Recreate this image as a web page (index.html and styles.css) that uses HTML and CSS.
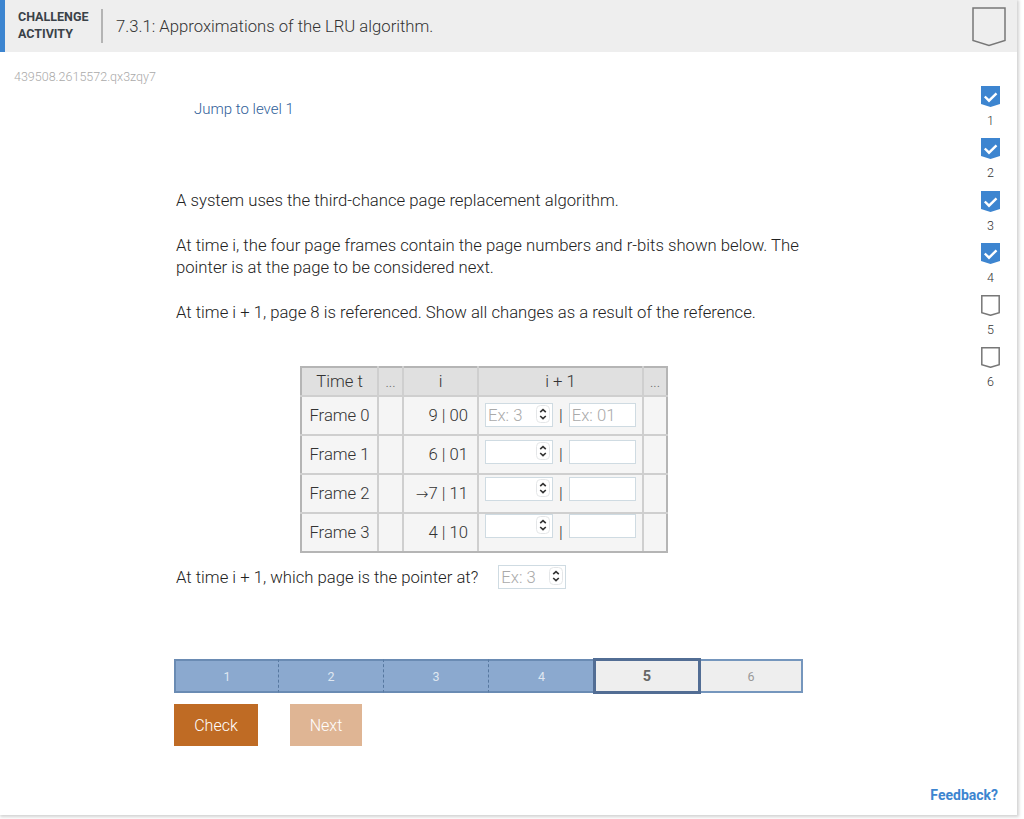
FILE: index.html
```html
<!DOCTYPE html>
<html lang="en">
<head>
<meta charset="utf-8">
<title>Challenge activity</title>
<link rel="stylesheet" href="styles.css">
</head>
<body>
<svg class="defs" width="0" height="0" aria-hidden="true">
  <symbol id="spin" viewBox="0 0 14 18">
    <rect x="0.5" y="0.5" width="13" height="17" rx="4" fill="#fff" stroke="#e4e6e8"/>
    <path d="M4.200 7.200L7 4.600L9.800 7.200M4.200 11L7 13.600L9.800 11" fill="none" stroke="#333" stroke-width="1.600"/>
  </symbol>
  <symbol id="check" viewBox="0 0 19 21">
    <path d="M0 0H19V18L9.500 21L0 18Z" fill="#3d85d0"/>
    <path d="M3.800 10.500L8 14.700L15.500 7.300" fill="none" stroke="#fff" stroke-width="2.400"/>
  </symbol>
  <symbol id="empty" viewBox="0 0 19 21">
    <path d="M.8 .8H18.200V17.800L9.500 20.300L.8 17.800Z" fill="#fff" stroke="#777" stroke-width="1.500"/>
  </symbol>
</svg>
<div class="card">
  <header class="head">
    <div class="tag">CHALLENGE<br>ACTIVITY</div>
    <h1 class="title">7.3.1: Approximations of the LRU algorithm.</h1>
    <svg class="bigmark" viewBox="0 0 34 40"><path d="M1 1H33V33.500L17 38.500L1 33.500Z" fill="none" stroke="#777" stroke-width="1.500"/></svg>
  </header>
  <div class="body">
    <main class="content">
      <div class="ident">439508.2615572.qx3zqy7</div>
      <div class="jump">Jump to level 1</div>
      <div class="question">
        <p>A system uses the third-chance page replacement algorithm.</p>
        <p>At time i, the four page frames contain the page numbers and r-bits shown below. The pointer is at the page to be considered next.</p>
        <p>At time i + 1, page 8 is referenced. Show all changes as a result of the reference.</p>
      </div>
      <table class="grid">
        <thead>
          <tr><th class="c1">Time t</th><th class="c2 dots">...</th><th class="c3">i</th><th class="c4">i + 1</th><th class="c5 dots">...</th></tr>
        </thead>
        <tbody>
          <tr class="r0">
            <td>Frame 0</td><td></td><td class="val">9 | 00</td>
            <td><div class="pair"><span class="field num"><input class="box" placeholder="Ex: 3"><svg class="spin"><use href="#spin"/></svg></span><span class="sep">|</span><input class="box bits" placeholder="Ex: 01"></div></td><td></td>
          </tr>
          <tr class="r1">
            <td>Frame 1</td><td></td><td class="val">6 | 01</td>
            <td><div class="pair"><span class="field num"><input class="box"><svg class="spin"><use href="#spin"/></svg></span><span class="sep">|</span><input class="box bits"></div></td><td></td>
          </tr>
          <tr class="r2">
            <td>Frame 2</td><td></td><td class="val"><span class="arrow">→</span>7 | 11</td>
            <td><div class="pair"><span class="field num"><input class="box"><svg class="spin"><use href="#spin"/></svg></span><span class="sep">|</span><input class="box bits"></div></td><td></td>
          </tr>
          <tr class="r3">
            <td>Frame 3</td><td></td><td class="val">4 | 10</td>
            <td><div class="pair"><span class="field num"><input class="box"><svg class="spin"><use href="#spin"/></svg></span><span class="sep">|</span><input class="box bits"></div></td><td></td>
          </tr>
        </tbody>
      </table>
      <div class="pointer">
        <span>At time i + 1, which page is the pointer at?</span>
        <span class="field wide"><input class="box" placeholder="Ex: 3"><svg class="spin"><use href="#spin"/></svg></span>
      </div>
      <div class="levels">
        <div class="lv done">1</div>
        <div class="lv done">2</div>
        <div class="lv done">3</div>
        <div class="lv done last">4</div>
        <div class="lv now">5</div>
        <div class="lv todo">6</div>
      </div>
      <div class="actions">
        <button class="btn check">Check</button>
        <button class="btn next">Next</button>
      </div>
    </main>
    <aside class="marks">
      <div class="mark"><svg class="mk"><use href="#check"/></svg><span>1</span></div>
      <div class="mark"><svg class="mk"><use href="#check"/></svg><span>2</span></div>
      <div class="mark"><svg class="mk"><use href="#check"/></svg><span>3</span></div>
      <div class="mark"><svg class="mk"><use href="#check"/></svg><span>4</span></div>
      <div class="mark"><svg class="mk"><use href="#empty"/></svg><span>5</span></div>
      <div class="mark"><svg class="mk"><use href="#empty"/></svg><span>6</span></div>
    </aside>
  </div>
  <footer class="foot">Feedback?</footer>
</div>
</body>
</html>
```

FILE: styles.css
```css
* { box-sizing: border-box; }
html, body { margin: 0; padding: 0; background: #fff; }
body { font-family: Roboto, "Liberation Sans", sans-serif; color: #333; height: 819px; overflow: hidden; }
.defs { position: absolute; }

.card { width: 1017px; height: 815px; background: #fff; box-shadow: 1px 1px 3px 1px rgba(0,0,0,.18); display: flex; flex-direction: column; }

.head { height: 52px; flex: none; background: #eeeeee; border-left: 5px solid #3d85d0; display: flex; align-items: center; padding-left: 13px; padding-right: 11px; }
.tag { font-size: 12.500px; font-weight: 700; line-height: 16.500px; color: #3a4248; width: 85px; height: 34px; border-right: 2px solid #b4b4b4; }
.title { font-size: 16.700px; font-weight: 300; margin: 0 0 0 13px; color: #333; flex: 1; }
.bigmark { width: 34px; height: 40px; margin-top: 1px; }

.body { flex: 1; display: flex; min-height: 0; }
.content { flex: 1; padding: 0 0 0 14px; min-width: 0; }
.ident { font-size: 12.500px; font-weight: 300; color: #aaa; line-height: 14px; margin-top: 18px; }
.jump { font-size: 15px; font-weight: 300; color: #2f6099; line-height: 18px; margin: 16px 0 0 180px; }

.question { margin: 72px 0 0 162px; width: 640px; font-size: 16.700px; font-weight: 300; line-height: 22.400px; color: #222; }
.question p { margin: 0 0 22.400px; }

.grid { border-collapse: collapse; table-layout: fixed; width: 366px; margin: 42px 0 0 286px; font-size: 16.700px; font-weight: 300; color: #333; background: #f5f5f5; }
.grid th, .grid td { border: 2px solid #cfcfcf; padding: 0; }
.grid th { background: #e0e0e0; height: 29px; font-weight: 300; text-align: center; border-top-color: #b5b5b5; }
.grid td { height: 39px; text-align: center; }
.grid tr > :first-child { border-left-color: #b5b5b5; }
.grid tr > :last-child { border-right-color: #b5b5b5; }
.grid .r3 td { border-bottom-color: #b5b5b5; }
.c1 { width: 77px; }
.c2 { width: 25px; }
.c3 { width: 75px; }
.c4 { width: 165px; }
.c5 { width: 24px; }
.grid .dots { font-size: 14px; color: #666; }
.grid td.val { text-align: right; padding-right: 9px; }
.arrow { font-family: "DejaVu Sans", sans-serif; font-size: 15px; }

.pair { display: flex; align-items: center; height: 37px; padding: 0 6px; }
.sep { margin: 0 6px; line-height: 18px; }
.field { position: relative; display: block; flex: none; align-self: flex-start; }
.num { width: 68px; }
.box { display: block; width: 100%; height: 24px; border: 1px solid #cfdbe2; background: #fff; padding: 0 2px; font: 300 16.700px Roboto, "Liberation Sans", sans-serif; color: #333; }
.box::placeholder { color: #aaa; opacity: 1; }
.bits { width: 67px; flex: none; align-self: flex-start; }
.r0 .field, .r0 .bits { margin-top: 6px; }
.r1 .field, .r1 .bits { margin-top: 4px; }
.r2 .field, .r2 .bits { margin-top: 2px; }
.r3 .field, .r3 .bits { margin-top: 0; }
.spin { position: absolute; right: 3px; top: 2px; width: 14px; height: 18px; }

.pointer { display: flex; align-items: center; margin: 12px 0 0 162px; font-size: 16.700px; font-weight: 300; color: #222; height: 24px; }
.pointer .field { align-self: center; }
.wide { width: 68px; margin-left: 20px; }

.levels { display: flex; align-items: center; width: 629px; height: 36px; margin: 69px 0 0 160px; }
.lv { width: 105px; height: 34px; font-size: 12.500px; display: flex; align-items: center; justify-content: center; }
.done { background: #8ba9cf; color: #dfe7f1; border-top: 2px solid #6a8bb3; border-bottom: 2px solid #6a8bb3; border-right: 1px dashed #56779f; }
.done:first-child { border-left: 2px solid #6a8bb3; }
.last { border-right: 0; }
.now { width: 108px; height: 36px; margin-left: -1px; background: #eee; border: 3px solid #526d94; color: #666; font-size: 14.500px; font-weight: 700; }
.todo { width: 102px; background: #eee; color: #999; border: 2px solid #7596bd; border-left: 0; }

.actions { display: flex; gap: 32px; margin: 10px 0 0 160px; }
.btn { height: 42px; border: 0; padding: 0; color: #fff; font: 300 16px Roboto, "Liberation Sans", sans-serif; }
.check { width: 84px; background: #bf6b24; }
.next { width: 72px; background: #dfb594; }

.marks { width: 54px; flex: none; padding: 34px 0 0 0; display: flex; flex-direction: column; }
.mark { height: 52.300px; width: 19px; margin-left: 18px; display: flex; flex-direction: column; align-items: center; font-size: 12.500px; font-weight: 300; color: #333; }
.mk { width: 19px; height: 21px; flex: none; }
.mark span { line-height: 14px; margin-top: 7px; }

.foot { flex: none; height: 28px; padding-right: 19px; text-align: right; font-size: 14px; font-weight: 700; color: #3d85d0; line-height: 16px; }
```
